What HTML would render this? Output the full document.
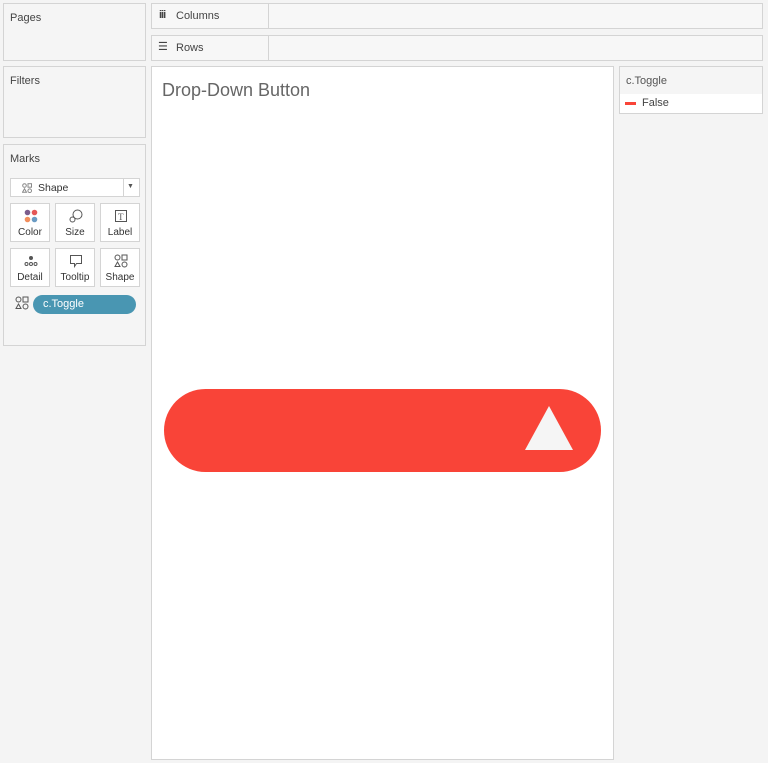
<!DOCTYPE html>
<html><head><style>
*{margin:0;padding:0;box-sizing:border-box}
body{width:768px;height:763px;background:#f4f4f4;font-family:"Liberation Sans",sans-serif;font-size:11px;color:#333;position:relative;overflow:hidden}
.p{position:absolute;border:1px solid #d4d4d4;background:#f5f5f5}
.t{position:absolute;font-size:11px;color:#444}
.btn{position:absolute;border:1px solid #d4d4d4;background:#fff;width:40px;height:39px;text-align:center;font-size:10px;color:#333}
.btn span{position:absolute;left:0;right:0;bottom:3px}
.btn svg{position:absolute;left:13px;top:5px}
</style></head><body>
<div class="p" style="left:3px;top:3px;width:143px;height:58px"><div class="t" style="left:6px;top:8px">Pages</div></div>
<div class="p" style="left:151px;top:3px;width:612px;height:26px;background:#f7f7f7"><div style="position:absolute;left:116px;top:0;bottom:0;border-left:1px solid #d4d4d4"></div>
<div class="t" style="left:7px;top:5px;font-weight:bold;letter-spacing:-1px">iii</div><div class="t" style="left:24px;top:6px">Columns</div></div>
<div class="p" style="left:151px;top:35px;width:612px;height:26px;background:#f7f7f7"><div style="position:absolute;left:116px;top:0;bottom:0;border-left:1px solid #d4d4d4"></div>
<div class="t" style="left:6px;top:4px">☰</div><div class="t" style="left:24px;top:6px">Rows</div></div>
<div class="p" style="left:3px;top:66px;width:143px;height:72px"><div class="t" style="left:6px;top:8px">Filters</div></div>
<div class="p" style="left:3px;top:144px;width:143px;height:202px">
<div class="t" style="left:6px;top:8px">Marks</div>
<div style="position:absolute;left:6px;top:33px;width:130px;height:19px;border:1px solid #d4d4d4;background:#fff">
<svg width="10" height="10" fill="none" stroke="#888" style="position:absolute;left:11px;top:4px"><circle cx="2.5" cy="2.5" r="1.8"/><rect x="6" y="0.7" width="3.5" height="3.5"/><path d="M2.5 5.8l2 3.5h-4z"/><circle cx="7.7" cy="7.7" r="1.8"/></svg>
<span style="position:absolute;left:27px;top:3px;font-size:10.5px">Shape</span>
<div style="position:absolute;left:112px;top:0;bottom:0;border-left:1px solid #d4d4d4"></div>
<span style="position:absolute;left:116px;top:4px;font-size:7px;color:#555">▼</span></div>
<div class="btn" style="left:6px;top:58px"><svg width="14" height="14"><circle cx="3.5" cy="3.5" r="2.8" fill="#7b5c8c"/><circle cx="10.5" cy="3.5" r="2.8" fill="#e45756"/><circle cx="3.5" cy="10.5" r="2.8" fill="#f28e5c"/><circle cx="10.5" cy="10.5" r="2.8" fill="#6a9bc3"/></svg><span>Color</span></div>
<div class="btn" style="left:51px;top:58px"><svg width="14" height="14" fill="none" stroke="#555"><circle cx="8.5" cy="5.5" r="4.5"/><circle cx="3.5" cy="10.5" r="2.5"/></svg><span>Size</span></div>
<div class="btn" style="left:96px;top:58px"><svg width="14" height="14" fill="none" stroke="#555"><rect x="1.5" y="1.5" width="11" height="11"/><text x="4" y="11" font-size="9" fill="#555" stroke="none" font-family="Liberation Serif">T</text></svg><span>Label</span></div>
<div class="btn" style="left:6px;top:103px"><svg width="14" height="14" fill="none" stroke="#555"><circle cx="7" cy="4" r="1.5" fill="#555"/><circle cx="2.5" cy="10" r="1.5"/><circle cx="7" cy="10" r="1.5"/><circle cx="11.5" cy="10" r="1.5"/></svg><span>Detail</span></div>
<div class="btn" style="left:51px;top:103px"><svg width="14" height="14" fill="none" stroke="#555"><path d="M1.5 1.5h11v8h-5l-2 3v-3h-4z"/></svg><span>Tooltip</span></div>
<div class="btn" style="left:96px;top:103px"><svg width="14" height="14" fill="none" stroke="#555"><circle cx="3.5" cy="3.5" r="2.5"/><rect x="8" y="1" width="5" height="5"/><path d="M3.5 8l2.5 4.5h-5z"/><circle cx="10.5" cy="10.5" r="2.5"/></svg><span>Shape</span></div>
<svg width="14" height="14" fill="none" stroke="#555" style="position:absolute;left:11px;top:151px"><circle cx="3.5" cy="3.5" r="2.5"/><rect x="8" y="1" width="5" height="5"/><path d="M3.5 8l2.5 4.5h-5z"/><circle cx="10.5" cy="10.5" r="2.5"/></svg>
<div style="position:absolute;left:29px;top:150px;width:103px;height:19px;border-radius:10px;background:#4996b2;color:#fff;font-size:11px;padding:3px 0 0 10px">c.Toggle</div>
</div>
<div class="p" style="left:151px;top:66px;width:463px;height:694px;background:#fff">
<div style="position:absolute;left:10px;top:13px;font-size:18px;color:#666">Drop-Down Button</div></div>
<div style="position:absolute;left:164px;top:389px;width:437px;height:83px;border-radius:42px;background:#f94438"></div>
<svg width="48" height="44" style="position:absolute;left:525px;top:406px"><path d="M24 0L48 44H0z" fill="#f5f5f5"/></svg>
<div class="p" style="left:619px;top:66px;width:144px;height:48px;background:#f5f5f5">
<div class="t" style="left:6px;top:8px;color:#555">c.Toggle</div>
<div style="position:absolute;left:0;right:0;top:27px;bottom:0;background:#fff"></div>
<div style="position:absolute;left:5px;top:35px;width:11px;height:3px;background:#f94438"></div>
<div class="t" style="left:22px;top:30px">False</div></div>
</body></html>
